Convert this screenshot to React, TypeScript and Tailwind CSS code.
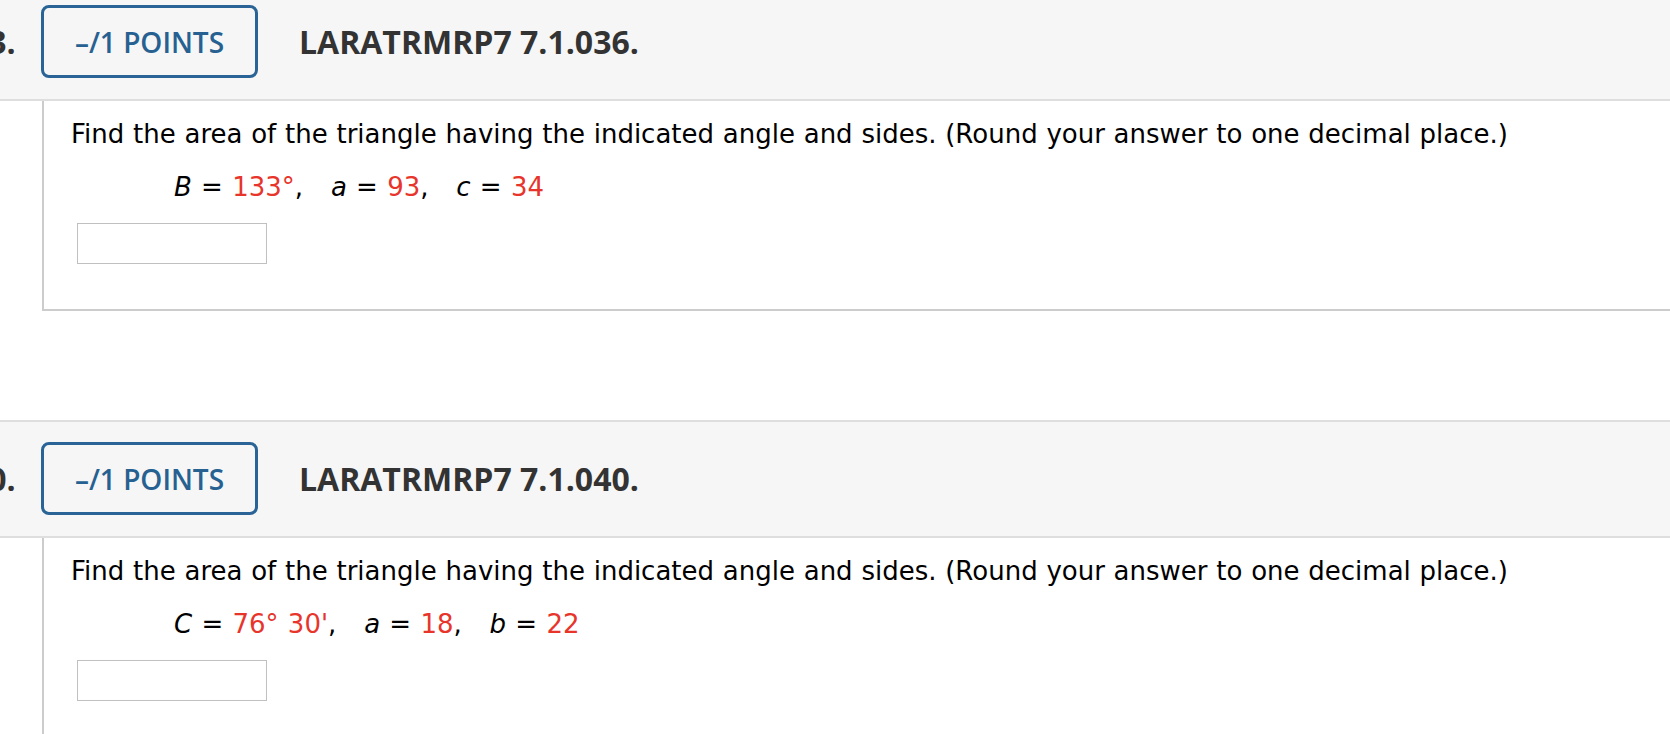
import React from "react";

type Part = { t: string; red?: boolean; it?: boolean };

function Question({
  num,
  code,
  parts,
  first,
}: {
  num: string;
  code: string;
  parts: Part[];
  first?: boolean;
}) {
  return (
    <div className={first ? "-mt-[17px]" : "mt-[109px]"}>
      <div className="flex items-center border-y-2 border-[#dedede] bg-[#f6f6f6] pt-[20px] pb-[21px]">
        <div className="-ml-[30px] w-[40px] text-right font-['Open_Sans',sans-serif] text-[32px] font-bold leading-none text-[#333]">
          {num}
        </div>
        <div className="ml-[31px] flex h-[73px] w-[217px] items-center justify-center rounded-[8px] border-[3px] border-[#2a6496] font-['Open_Sans',sans-serif] text-[28px] font-semibold text-[#266191]">
          –/1 POINTS
        </div>
        <div className="ml-[41px] font-['Open_Sans',sans-serif] text-[32px] font-bold leading-none text-[#333]">
          {code}
        </div>
      </div>
      <div className="ml-[42px] border-b-2 border-l-2 border-[#cccccc] bg-white pt-[19px] pb-[45px] pl-[27px] font-['DejaVu_Sans',Verdana,sans-serif] text-[26px] leading-[29px] text-black">
        <div className="whitespace-nowrap [word-spacing:0.5px]">
          Find the area of the triangle having the indicated angle and sides. (Round your answer to one decimal place.)
        </div>
        <div className="mt-[24px] ml-[103px] whitespace-pre [word-spacing:1px]">
          {parts.map((p, i) => (
            <span
              key={i}
              className={
                (p.red ? "text-[#e8352b] " : "text-black ") + (p.it ? "italic" : "")
              }
            >
              {p.t}
            </span>
          ))}
        </div>
        <div className="mt-[21px] ml-[6px] h-[41px] w-[190px] border border-[#c0c0c0] bg-white" />
      </div>
    </div>
  );
}

export default function App() {
  return (
    <div className="h-[734px] w-[1670px] overflow-hidden bg-white">
      <Question
        first
        num="13."
        code="LARATRMRP7 7.1.036."
        parts={[
          { t: "B", it: true },
          { t: " = " },
          { t: "133°", red: true },
          { t: ",   " },
          { t: "a", it: true },
          { t: " = " },
          { t: "93", red: true },
          { t: ",   " },
          { t: "c", it: true },
          { t: " = " },
          { t: "34", red: true },
        ]}
      />
      <Question
        num="20."
        code="LARATRMRP7 7.1.040."
        parts={[
          { t: "C", it: true },
          { t: " = " },
          { t: "76° 30'", red: true },
          { t: ",   " },
          { t: "a", it: true },
          { t: " = " },
          { t: "18", red: true },
          { t: ",   " },
          { t: "b", it: true },
          { t: " = " },
          { t: "22", red: true },
        ]}
      />
    </div>
  );
}
